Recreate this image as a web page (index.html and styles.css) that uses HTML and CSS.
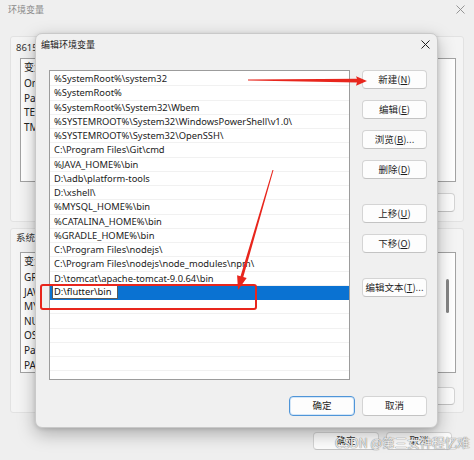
FILE: index.html
```html
<!DOCTYPE html>
<html lang="zh-CN">
<head>
<meta charset="utf-8">
<title>编辑环境变量</title>
<link rel="stylesheet" href="styles.css">
</head>
<body>
<div class="bgwin">
  <div class="bg-title">
    <span>环境变量</span>
    <svg class="bg-close" width="9" height="9" viewBox="0 0 9 9"><path d="M0.5 0.5L8.5 8.5M8.5 0.5L0.5 8.5" stroke="#8a8a8a" stroke-width="0.9" fill="none"/></svg>
  </div>
  <div class="group g1">
    <div class="glabel">86151的用户变量(U)</div>
    <div class="bglist ulist">
      <div class="cols">
        <div class="bgrow head"><span>变量</span></div>
        <div class="bgrow"><span>OneDrive</span></div>
        <div class="bgrow"><span>Path</span></div>
        <div class="bgrow"><span>TEMP</span></div>
        <div class="bgrow"><span>TMP</span></div>
      </div>
    </div>
    <div class="bgbtns">
      <button class="btn bgbtn">新建(N)...</button>
      <button class="btn bgbtn">编辑(E)...</button>
      <button class="btn bgbtn">删除(D)</button>
    </div>
  </div>
  <div class="group g2">
    <div class="glabel">系统变量(S)</div>
    <div class="bglist slist">
      <div class="cols">
        <div class="bgrow head"><span>变量</span></div>
        <div class="bgrow"><span>GRADLE_HOME</span></div>
        <div class="bgrow"><span>JAVA_HOME</span></div>
        <div class="bgrow"><span>MYSQL_HOME</span></div>
        <div class="bgrow"><span>NUMBER_OF_PROCESSORS</span></div>
        <div class="bgrow"><span>OS</span></div>
        <div class="bgrow"><span>Path</span></div>
        <div class="bgrow"><span>PATHEXT</span></div>
        <div class="bgrow"><span>PROCESSOR_ARCHITECTURE</span></div>
      </div>
      <div class="sbar"><div class="thumb"></div></div>
    </div>
    <div class="bgbtns b2">
      <button class="btn bgbtn">新建(W)...</button>
      <button class="btn bgbtn">编辑(I)...</button>
      <button class="btn bgbtn">删除(L)</button>
    </div>
  </div>
  <div class="bg-foot">
    <button class="btn fbtn">确定</button>
    <button class="btn fbtn">取消</button>
  </div>
</div>

<div class="dialog">
  <div class="dtitle">
    <span>编辑环境变量</span>
    <svg class="dclose" width="9" height="9" viewBox="0 0 9 9"><path d="M0.5 0.5L8.5 8.5M8.5 0.5L0.5 8.5" stroke="#1f1f1f" stroke-width="1" fill="none"/></svg>
  </div>
  <div class="dbody">
    <div class="plist">
      <div class="prow">%SystemRoot%\system32</div>
      <div class="prow">%SystemRoot%</div>
      <div class="prow">%SystemRoot%\System32\Wbem</div>
      <div class="prow">%SYSTEMROOT%\System32\WindowsPowerShell\v1.0\</div>
      <div class="prow">%SYSTEMROOT%\System32\OpenSSH\</div>
      <div class="prow">C:\Program Files\Git\cmd</div>
      <div class="prow">%JAVA_HOME%\bin</div>
      <div class="prow">D:\adb\platform-tools</div>
      <div class="prow">D:\xshell\</div>
      <div class="prow">%MYSQL_HOME%\bin</div>
      <div class="prow">%CATALINA_HOME%\bin</div>
      <div class="prow">%GRADLE_HOME%\bin</div>
      <div class="prow">C:\Program Files\nodejs\</div>
      <div class="prow">C:\Program Files\nodejs\node_modules\npm\</div>
      <div class="prow">D:\tomcat\apache-tomcat-9.0.64\bin</div>
      <div class="prow sel"><span class="editbox">D:\flutter\bin</span></div>
      <div class="prow"></div>
      <div class="prow"></div>
      <div class="prow"></div>
      <div class="prow"></div>
      <div class="prow"></div>
      <div class="prow"></div>
    </div>
    <div class="dbtns">
      <button class="btn dbtn">新建(<u>N</u>)</button>
      <button class="btn dbtn">编辑(<u>E</u>)</button>
      <button class="btn dbtn">浏览(<u>B</u>)...</button>
      <button class="btn dbtn">删除(<u>D</u>)</button>
      <button class="btn dbtn gap">上移(<u>U</u>)</button>
      <button class="btn dbtn">下移(<u>O</u>)</button>
      <button class="btn dbtn gap">编辑文本(<u>T</u>)...</button>
    </div>
  </div>
  <div class="dfoot">
    <button class="btn ok">确定</button>
    <button class="btn cancel">取消</button>
  </div>
</div>

<div class="redbox"></div>
<svg class="arrows" width="474" height="460" viewBox="0 0 474 460">
  <polygon fill="#e8261d" points="248,79.6 357,78.8 356,76.2 367,80.9 356,85.8 357,82.4 248,80.6"/>
  <polygon fill="#e8261d" points="273.5,170.1 243.3,277.0 246.7,278.0 238,290 237.1,275.2 240.5,276.2 272.5,169.9"/>
</svg>
<div class="watermark">CSDN @第三女神程忆难</div>
</body>
</html>
```
FILE: styles.css
```css
* { box-sizing: border-box; }
html, body { margin: 0; padding: 0; }
body {
  width: 474px;
  height: 460px;
  overflow: hidden;
  position: relative;
  font-family: "Noto Sans", "Noto Sans CJK SC", sans-serif;
  color: #1b1b1b;
  background: #ececec;
}

/* ---------- background window ---------- */
.bgwin {
  width: 474px;
  height: 460px;
  background: #efefef;
  display: flex;
  flex-direction: column;
}
.bg-title {
  height: 20px;
  padding: 3px 9px 0 8px;
  display: flex;
  justify-content: space-between;
  align-items: flex-start;
  font-size: 9px;
  line-height: 13px;
  color: #8a8a8a;
}
.bg-close { margin-top: 2px; }

.group {
  margin: 0 10px;
  background: #f4f4f4;
  border: 1px solid #e2e2e2;
  border-radius: 3px;
  padding: 4px 7px 9px 9px;
  display: flex;
  flex-direction: column;
}
.g1 { margin-top: 16px; }
.g2 { margin-top: 6px; padding-top: 2px; padding-bottom: 7px; }
.glabel {
  height: 14px;
  line-height: 14px;
  font-size: 9.5px;
  color: #333;
  margin-left: -4px;
  white-space: nowrap;
}
.bglist {
  background: #fff;
  border: 1px solid #a3a3a3;
  display: flex;
  overflow: hidden;
}
.ulist { margin-top: 3px; height: 124px; }
.slist { margin-top: 7px; height: 121px; }
.cols { flex: 1; }
.bgrow {
  height: 14.6px;
  line-height: 14.6px;
  padding-left: 3px;
  font-size: 10px;
  color: #222;
  white-space: nowrap;
}
.bgrow.head { height: 17px; line-height: 17px; }
.sbar { width: 11px; padding-left: 2px; }
.thumb {
  width: 3px;
  height: 34px;
  margin-top: 26px;
  background: #858585;
  border-radius: 2px;
}
.bgbtns {
  margin-top: 11px;
  display: flex;
  justify-content: flex-end;
  gap: 7px;
  padding-right: 1px;
}
.bgbtns.b2 { margin-top: 14px; }
.bgbtn { width: 66px; height: 19px; }
.b2 .bgbtn { height: 18px; }
.bg-foot {
  margin-top: 19px;
  display: flex;
  justify-content: flex-end;
  gap: 7px;
  padding-right: 22px;
}
.fbtn { width: 66px; height: 18px; }

/* ---------- buttons ---------- */
.btn {
  font-family: "Noto Sans CJK SC", "Noto Sans", sans-serif;
  font-size: 9.5px;
  color: #1f1f1f;
  background: #fdfdfd;
  border: 1px solid #d4d4d4;
  border-bottom-color: #c3c3c3;
  border-radius: 4px;
  padding: 0;
  margin: 0;
  line-height: 1;
  white-space: nowrap;
}
.btn u { text-underline-offset: 1px; }

/* ---------- dialog ---------- */
.dialog {
  position: absolute;
  left: 35px;
  top: 33px;
  width: 403px;
  height: 395px;
  background: #f0f0f0;
  border: 1px solid #c9c9c9;
  border-radius: 7px;
  box-shadow: 0 6px 18px rgba(0, 0, 0, 0.28), 0 1px 4px rgba(0, 0, 0, 0.12);
  display: flex;
  flex-direction: column;
}
.dtitle {
  height: 21px;
  padding: 0 7px 0 5px;
  display: flex;
  justify-content: space-between;
  align-items: center;
  font-family: "Noto Sans CJK SC", sans-serif;
  font-size: 9px;
  color: #1a1a1a;
}
.dbody {
  margin-top: 15px;
  padding: 0 10px 0 13px;
  display: flex;
  gap: 12px;
}
.plist {
  width: 301px;
  height: 310px;
  background: #fff;
  border: 1px solid #9c9c9c;
  padding-top: 1px;
  overflow: hidden;
}
.prow {
  height: 14.25px;
  line-height: 14px;
  padding-left: 4px;
  font-size: 9.35px;
  color: #1b1b1b;
  border-bottom: 1px solid #f1f1f1;
  white-space: nowrap;
}
.prow.sel {
  background: #0a72d2;
  border-bottom-color: #0a72d2;
  padding-left: 2px;
  display: flex;
  align-items: center;
}
.editbox {
  display: block;
  width: 66px;
  height: 14px;
  line-height: 12px;
  background: #fff;
  border: 1px solid #5a5a5a;
  padding-left: 1px;
  color: #111;
}
.dbtns {
  width: 65px;
  display: flex;
  flex-direction: column;
  gap: 11px;
}
.dbtn { width: 65px; height: 19px; }
.dbtn.gap { margin-top: 14px; }
.dfoot {
  margin-top: 16px;
  display: flex;
  justify-content: flex-end;
  gap: 7px;
  padding-right: 10px;
}
.ok {
  width: 66px;
  height: 20px;
  border: 1px solid #4f95d8;
  box-shadow: inset 0 0 0 1px #d3e6f8;
}
.cancel { width: 65px; height: 20px; }

/* ---------- annotations ---------- */
.redbox {
  position: absolute;
  left: 40px;
  top: 284px;
  width: 217px;
  height: 26px;
  border: 2px solid #e8261d;
  border-radius: 3px;
}
.arrows {
  position: absolute;
  left: 0;
  top: 0;
  pointer-events: none;
}
.watermark {
  position: absolute;
  left: 335px;
  top: 435px;
  font-family: "Noto Sans CJK SC", sans-serif;
  font-size: 12.5px;
  line-height: 16px;
  color: rgba(255, 255, 255, 0.85);
  text-shadow: 0 0 1px #7a7a7a, 0 0 1px #7a7a7a;
  white-space: nowrap;
}
```
